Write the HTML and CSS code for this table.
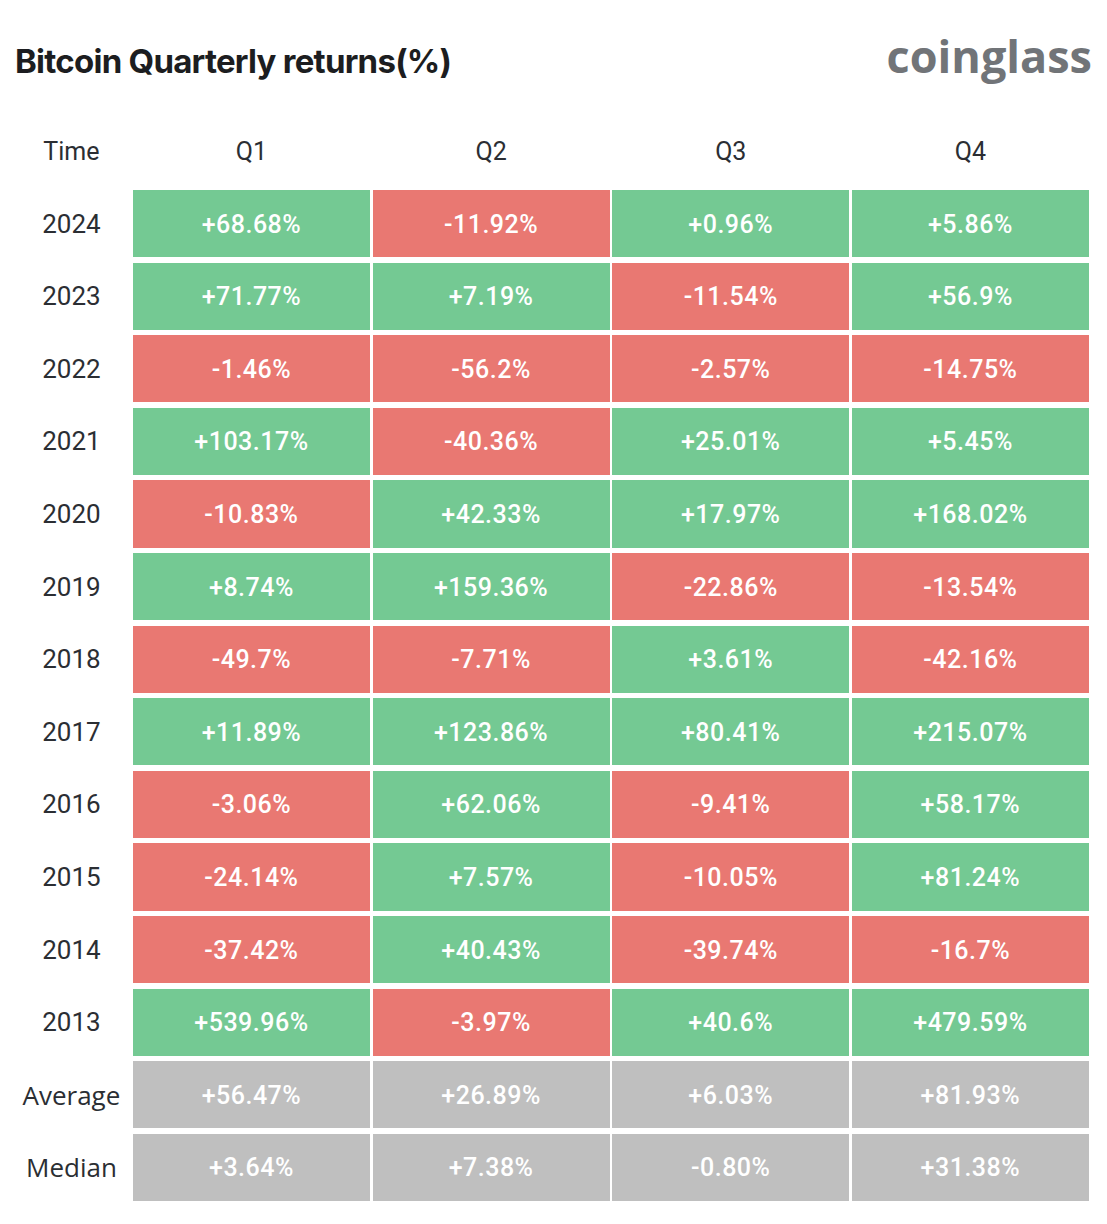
FILE: index.html
```html
<!DOCTYPE html>
<html lang="en">
<head>
<meta charset="utf-8">
<title>Bitcoin Quarterly returns(%)</title>
<link rel="stylesheet" href="styles.css">
</head>
<body>
<div class="page">
  <header class="top">
    <h1 class="title">Bitcoin Quarterly returns(%)</h1>
    <div class="logo">coinglass</div>
  </header>
  <div class="table">
    <div class="label head">Time</div>
    <div class="qhead">Q1</div>
    <div class="qhead">Q2</div>
    <div class="qhead">Q3</div>
    <div class="qhead">Q4</div>

    <div class="label">2024</div>
    <div class="cell up">+68.68%</div>
    <div class="cell down">-11.92%</div>
    <div class="cell up">+0.96%</div>
    <div class="cell up">+5.86%</div>

    <div class="label">2023</div>
    <div class="cell up">+71.77%</div>
    <div class="cell up">+7.19%</div>
    <div class="cell down">-11.54%</div>
    <div class="cell up">+56.9%</div>

    <div class="label">2022</div>
    <div class="cell down">-1.46%</div>
    <div class="cell down">-56.2%</div>
    <div class="cell down">-2.57%</div>
    <div class="cell down">-14.75%</div>

    <div class="label">2021</div>
    <div class="cell up">+103.17%</div>
    <div class="cell down">-40.36%</div>
    <div class="cell up">+25.01%</div>
    <div class="cell up">+5.45%</div>

    <div class="label">2020</div>
    <div class="cell down">-10.83%</div>
    <div class="cell up">+42.33%</div>
    <div class="cell up">+17.97%</div>
    <div class="cell up">+168.02%</div>

    <div class="label">2019</div>
    <div class="cell up">+8.74%</div>
    <div class="cell up">+159.36%</div>
    <div class="cell down">-22.86%</div>
    <div class="cell down">-13.54%</div>

    <div class="label">2018</div>
    <div class="cell down">-49.7%</div>
    <div class="cell down">-7.71%</div>
    <div class="cell up">+3.61%</div>
    <div class="cell down">-42.16%</div>

    <div class="label">2017</div>
    <div class="cell up">+11.89%</div>
    <div class="cell up">+123.86%</div>
    <div class="cell up">+80.41%</div>
    <div class="cell up">+215.07%</div>

    <div class="label">2016</div>
    <div class="cell down">-3.06%</div>
    <div class="cell up">+62.06%</div>
    <div class="cell down">-9.41%</div>
    <div class="cell up">+58.17%</div>

    <div class="label">2015</div>
    <div class="cell down">-24.14%</div>
    <div class="cell up">+7.57%</div>
    <div class="cell down">-10.05%</div>
    <div class="cell up">+81.24%</div>

    <div class="label">2014</div>
    <div class="cell down">-37.42%</div>
    <div class="cell up">+40.43%</div>
    <div class="cell down">-39.74%</div>
    <div class="cell down">-16.7%</div>

    <div class="label">2013</div>
    <div class="cell up">+539.96%</div>
    <div class="cell down">-3.97%</div>
    <div class="cell up">+40.6%</div>
    <div class="cell up">+479.59%</div>

    <div class="label word">Average</div>
    <div class="cell stat">+56.47%</div>
    <div class="cell stat">+26.89%</div>
    <div class="cell stat">+6.03%</div>
    <div class="cell stat">+81.93%</div>

    <div class="label word">Median</div>
    <div class="cell stat">+3.64%</div>
    <div class="cell stat">+7.38%</div>
    <div class="cell stat">-0.80%</div>
    <div class="cell stat">+31.38%</div>
  </div>
</div>
</body>
</html>
```
FILE: styles.css
```css
html, body {
  margin: 0;
  padding: 0;
  background: #ffffff;
}

.page {
  width: 1107px;
  height: 1224px;
  box-sizing: border-box;
  font-family: Roboto, "Liberation Sans", sans-serif;
}

.top {
  height: 117.4px;
  box-sizing: border-box;
  display: flex;
  align-items: center;
  justify-content: space-between;
  padding: 0 15px 0 15px;
}

.title {
  margin: 0;
  font-family: Inter, "Liberation Sans", sans-serif;
  font-weight: 700;
  font-size: 33px;
  letter-spacing: -0.75px;
  color: #1c1d20;
  margin-top: 4px;
}

.logo {
  font-family: "Open Sans", "DejaVu Sans", sans-serif;
  font-weight: 700;
  font-size: 45px;
  letter-spacing: 0px;
  color: #717478;
  margin-top: -6px;
}

.table {
  display: grid;
  padding-left: 12.6px;
  grid-template-columns: 117.7px repeat(4, 237px);
  grid-template-rows: repeat(15, 67.3px);
  column-gap: 2.67px;
  row-gap: 5.3px;
}

.label {
  display: flex;
  align-items: center;
  justify-content: center;
  font-size: 26px;
  color: #2b2e33;
}

.label.word {
  font-family: "Open Sans", Roboto, sans-serif;
  font-size: 26px;
}

.label.head {
  font-size: 25px;
}

.qhead {
  display: flex;
  align-items: center;
  justify-content: center;
  font-size: 25px;
  color: #2b2e33;
}

.cell {
  display: flex;
  align-items: center;
  justify-content: center;
  color: #ffffff;
  font-size: 25px;
  font-weight: 500;
  letter-spacing: 0.5px;
  padding-top: 1px;
}

.up { background: #74c993; }
.down { background: #e97872; }
.stat { background: #bfbfbf; }
```
